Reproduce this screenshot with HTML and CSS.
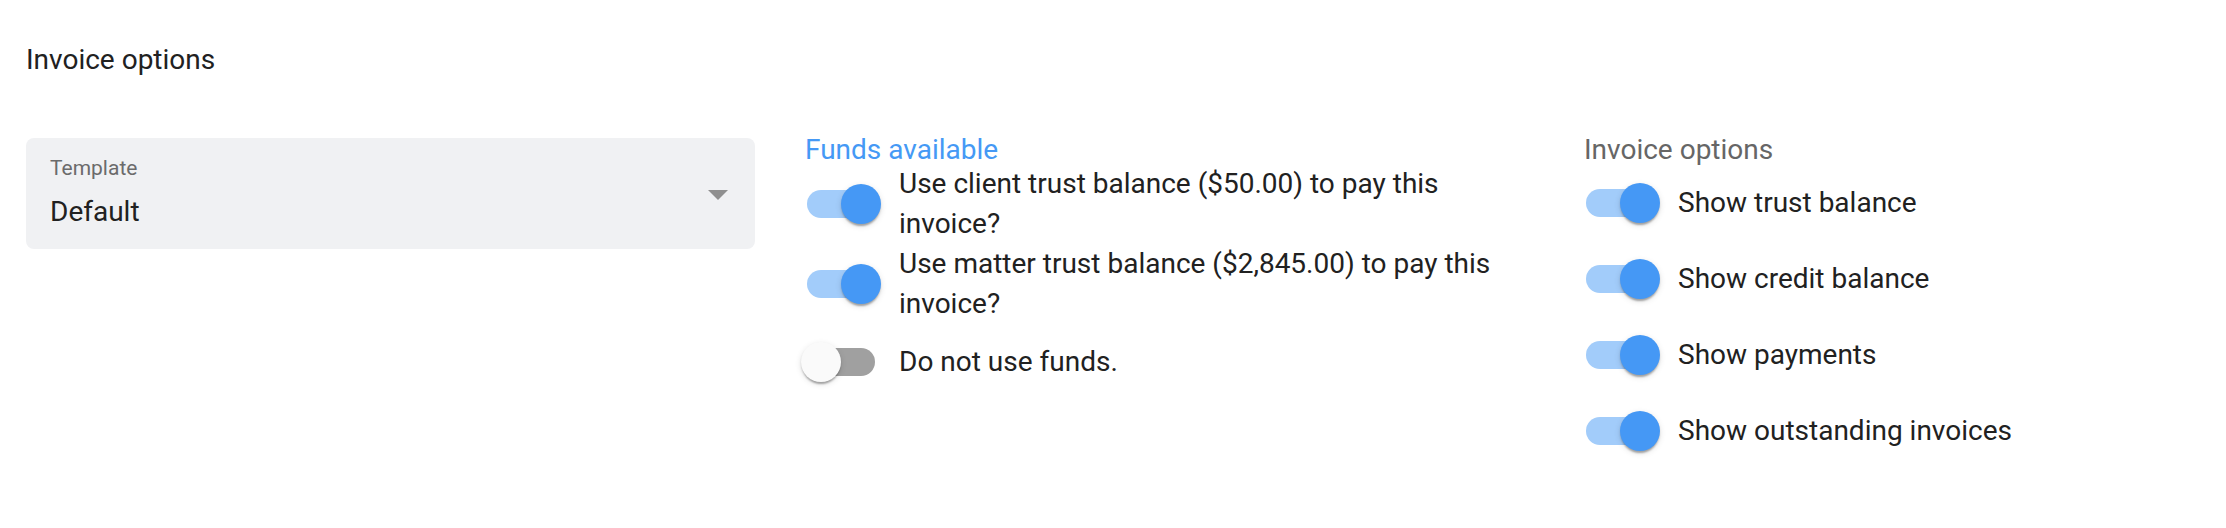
FILE: index.html
```html
<!DOCTYPE html>
<html lang="en">
<head>
<meta charset="utf-8">
<title>Invoice options</title>
<link rel="stylesheet" href="styles.css">
</head>
<body>
<div class="page">
  <div class="title">Invoice options</div>
  <div class="columns">
    <div class="col">
      <div class="select">
        <div class="select-content">
          <span class="select-label">Template</span>
          <span class="select-value">Default</span>
        </div>
        <svg class="select-arrow" width="20" height="10" viewBox="0 0 20 10"><path d="M0 0H20L10 10Z" fill="#8f8f8f"/></svg>
      </div>
    </div>
    <div class="col">
      <div class="legend legend-active">Funds available</div>
      <label class="option">
        <span class="switch"><span class="track on"></span><span class="thumb on"></span></span>
        <span class="option-text">Use client trust balance ($50.00) to pay this invoice?</span>
      </label>
      <label class="option">
        <span class="switch"><span class="track on"></span><span class="thumb on"></span></span>
        <span class="option-text">Use matter trust balance ($2,845.00) to pay this invoice?</span>
      </label>
      <label class="option">
        <span class="switch"><span class="track"></span><span class="thumb"></span></span>
        <span class="option-text">Do not use funds.</span>
      </label>
    </div>
    <div class="col">
      <div class="legend">Invoice options</div>
      <label class="option">
        <span class="switch"><span class="track on"></span><span class="thumb on"></span></span>
        <span class="option-text">Show trust balance</span>
      </label>
      <label class="option">
        <span class="switch"><span class="track on"></span><span class="thumb on"></span></span>
        <span class="option-text">Show credit balance</span>
      </label>
      <label class="option">
        <span class="switch"><span class="track on"></span><span class="thumb on"></span></span>
        <span class="option-text">Show payments</span>
      </label>
      <label class="option">
        <span class="switch"><span class="track on"></span><span class="thumb on"></span></span>
        <span class="option-text">Show outstanding invoices</span>
      </label>
    </div>
  </div>
</div>
</body>
</html>
```
FILE: styles.css
```css
html, body {
  margin: 0;
  padding: 0;
  background: #ffffff;
}
body {
  font-family: Roboto, "Liberation Sans", Arial, sans-serif;
  color: #212121;
}
.page {
  padding: 40px 0 0 26px;
}
.title {
  font-size: 28px;
  line-height: 40px;
  color: #212121;
}
.columns {
  margin-top: 44px;
  display: grid;
  grid-template-columns: 729px 729px 729px;
  column-gap: 50px;
  align-items: start;
}
.col {
  display: flex;
  flex-direction: column;
  align-items: flex-start;
}
.select {
  margin-top: 14px;
  width: 729px;
  height: 111px;
  box-sizing: border-box;
  background: #f0f1f3;
  border-radius: 8px;
  padding: 18px 27px 17px 24px;
  display: flex;
  align-items: center;
}
.select-content {
  flex: 1;
  display: flex;
  flex-direction: column;
}
.select-label {
  font-size: 21px;
  line-height: 24px;
  color: #6b6b6b;
  margin-bottom: 12px;
}
.select-value {
  font-size: 28px;
  line-height: 40px;
  color: #212121;
}
.select-arrow {
  display: block;
  flex: none;
  margin-top: 2px;
}
.legend {
  font-size: 28px;
  line-height: 28px;
  margin-top: 12px;
  color: #666666;
}
.legend-active {
  color: #4599f5;
}
.option {
  display: flex;
  align-items: center;
  margin-left: -22px;
  margin-right: 32px;
  cursor: pointer;
}
.col:last-child .legend {
  margin-bottom: 1px;
}
.switch {
  position: relative;
  flex: none;
  width: 116px;
  height: 76px;
  box-sizing: border-box;
  padding: 24px;
  display: inline-flex;
}
.track {
  width: 68px;
  height: 28px;
  border-radius: 14px;
  background: #a0a0a0;
}
.track.on {
  background: #a2ccfa;
}
.thumb {
  position: absolute;
  top: 18px;
  left: 18px;
  width: 40px;
  height: 40px;
  border-radius: 50%;
  background: #fafafa;
  box-shadow: 0 4px 2px -2px rgba(0,0,0,0.2), 0 2px 2px 0 rgba(0,0,0,0.14), 0 2px 6px 0 rgba(0,0,0,0.12);
}
.thumb.on {
  left: 58px;
  background: #4598f5;
}
.option-text {
  font-size: 28px;
  line-height: 40px;
  color: #212121;
}
```
